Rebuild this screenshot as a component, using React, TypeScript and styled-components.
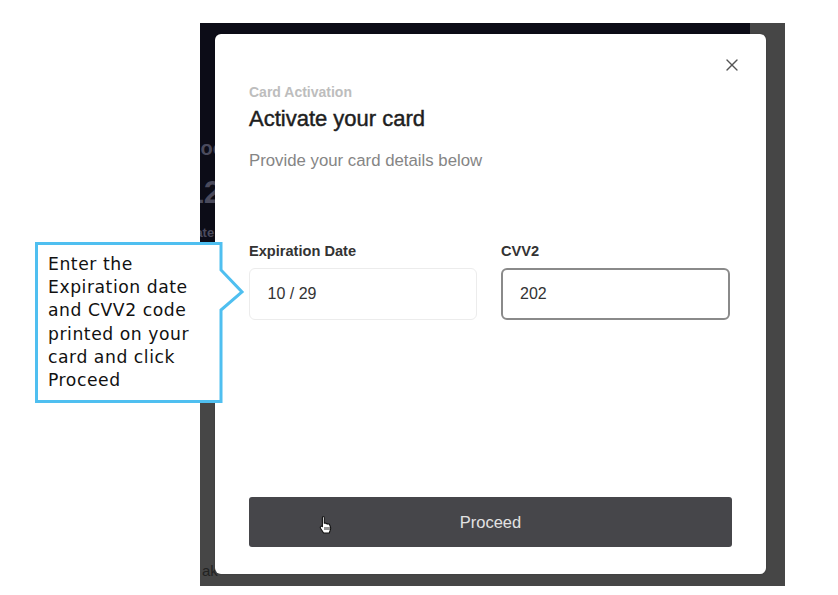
import React from "react";
import styled, { createGlobalStyle } from "styled-components";
import { X } from "lucide-react";

const GlobalStyle = createGlobalStyle`
  html, body {
    margin: 0;
    padding: 0;
    background: #ffffff;
  }
  * {
    box-sizing: border-box;
  }
`;

const Page = styled.div`
  position: relative;
  width: 838px;
  height: 595px;
  padding: 23px 0 0 200px;
  font-family: "Liberation Sans", Arial, sans-serif;
`;

const Frame = styled.div`
  width: 585px;
  height: 563px;
  background: #464646;
  display: grid;
  overflow: hidden;
  & > * {
    grid-area: 1 / 1;
  }
`;

const Backdrop = styled.div`
  width: 564px;
  height: 225px;
  background: #0c0c17;
  display: flex;
  flex-direction: column;
  padding: 115px 0 0 0;
  margin-left: -14px;
  color: #4a4a5c;
`;

const BackText = styled.div<{ $size: number; $gap: number }>`
  font-size: ${(p) => p.$size}px;
  line-height: 1;
  margin-top: ${(p) => p.$gap}px;
  font-weight: 600;
`;

const BottomText = styled.div`
  align-self: end;
  margin: 0 0 7px 2px;
  font-size: 15px;
  color: #222;
`;

const Modal = styled.div`
  margin: 11px 0 0 15px;
  width: 551px;
  height: 540px;
  background: #ffffff;
  border-radius: 6px;
  display: flex;
  flex-direction: column;
  padding: 0 34px 27px;
  box-shadow: 0 0 2px rgba(0, 0, 0, 0.25);
`;

const CloseRow = styled.div`
  display: flex;
  justify-content: flex-end;
  margin: 21px -10px 0 0;
  height: 20px;
  color: #555;
`;

const Eyebrow = styled.div`
  margin-top: 9px;
  font-size: 14px;
  line-height: 16px;
  font-weight: 700;
  color: #bdbdbd;
`;

const Title = styled.h1`
  margin: 6px 0 0;
  font-family: "Liberation Sans", Arial, sans-serif;
  font-size: 22px;
  line-height: 26px;
  font-weight: 400;
  color: #1e1e1e;
  -webkit-text-stroke: 0.45px #1e1e1e;
`;

const Subtitle = styled.p`
  margin: 19px 0 0;
  font-size: 16.8px;
  line-height: 20px;
  color: #858585;
`;

const Fields = styled.div`
  margin: 72px 2px 0 0;
  display: grid;
  grid-template-columns: 228px 229px;
  column-gap: 24px;
`;

const Field = styled.div`
  display: flex;
  flex-direction: column;
  gap: 9px;
`;

const Label = styled.label`
  font-size: 14.6px;
  line-height: 16px;
  font-weight: 700;
  color: #333;
`;

const Input = styled.div<{ $focused?: boolean }>`
  height: 52px;
  border-radius: 6px;
  border: ${(p) => (p.$focused ? "2px solid #8a8a8a" : "1.5px solid #ececec")};
  display: flex;
  align-items: center;
  padding-left: ${(p) => (p.$focused ? "17px" : "17.5px")};
  font-size: 16px;
  color: #333;
`;

const Button = styled.button`
  position: relative;
  margin-top: auto;
  height: 50px;
  border: none;
  border-radius: 3px;
  background: #46464a;
  color: #e2e2e2;
  font-family: "Liberation Sans", Arial, sans-serif;
  font-size: 16.5px;
  display: flex;
  align-items: center;
  justify-content: center;
  padding-right: 6px;
`;

const Cursor = styled.svg`
  position: absolute;
  left: 69px;
  top: 18px;
`;

const Callout = styled.div`
  position: absolute;
  left: 35px;
  top: 242px;
  width: 187px;
  height: 161px;
`;

const CalloutShape = styled.svg`
  position: absolute;
  left: 0;
  top: 0;
  overflow: visible;
`;

const CalloutText = styled.div`
  position: relative;
  padding: 11px 0 0 13px;
  font-family: "DejaVu Sans", sans-serif;
  font-size: 17.2px;
  line-height: 23.2px;
  color: #111;
  letter-spacing: 0.55px;
  white-space: nowrap;
`;

const App = () => {
  return (
    <>
      <GlobalStyle />
      <Page>
        <Frame>
          <Backdrop>
            <BackText $size={20} $gap={0}>Doc</BackText>
            <BackText $size={32} $gap={18}>12</BackText>
            <BackText $size={13} $gap={18}>Date</BackText>
          </Backdrop>
          <BottomText>ak</BottomText>
          <Modal>
            <CloseRow>
              <X size={20} strokeWidth={1.6} />
            </CloseRow>
            <Eyebrow>Card Activation</Eyebrow>
            <Title>Activate your card</Title>
            <Subtitle>Provide your card details below</Subtitle>
            <Fields>
              <Field>
                <Label>Expiration Date</Label>
                <Input>10 / 29</Input>
              </Field>
              <Field>
                <Label>CVV2</Label>
                <Input $focused>202</Input>
              </Field>
            </Fields>
            <Button>
              Proceed
              <Cursor width="16" height="20" viewBox="0 0 16 20">
                <path
                  d="M5 1.5c.8 0 1.3.6 1.3 1.3v5.5l.6-.2c.6-.1 1.2.2 1.4.7.5-.3 1.2-.2 1.6.3.5-.3 1.3-.1 1.6.5l.9 2.2c.4 1 .4 2.1 0 3.1L11.2 18H5.6L2.5 13.3c-.4-.6-.3-1.4.3-1.8.5-.4 1.2-.3 1.6.2V2.8c0-.7.2-1.3.6-1.3z"
                  fill="#ffffff"
                  stroke="#111"
                  strokeWidth="1.1"
                  strokeLinejoin="round"
                />
                <path d="M7 12v3M9 12v3M11 12v3" stroke="#111" strokeWidth="0.9" />
              </Cursor>
            </Button>
          </Modal>
        </Frame>
        <Callout>
          <CalloutShape width="187" height="161" viewBox="0 0 187 161">
            <path
              d="M1.5 1.5H186V28L207 50L186 68V159.5H1.5Z"
              fill="#ffffff"
              stroke="#4fbff0"
              strokeWidth="3"
              strokeLinejoin="miter"
            />
          </CalloutShape>
          <CalloutText>
            Enter the
            <br />
            Expiration date
            <br />
            and CVV2 code
            <br />
            printed on your
            <br />
            card and click
            <br />
            Proceed
          </CalloutText>
        </Callout>
      </Page>
    </>
  );
};

export default App;
